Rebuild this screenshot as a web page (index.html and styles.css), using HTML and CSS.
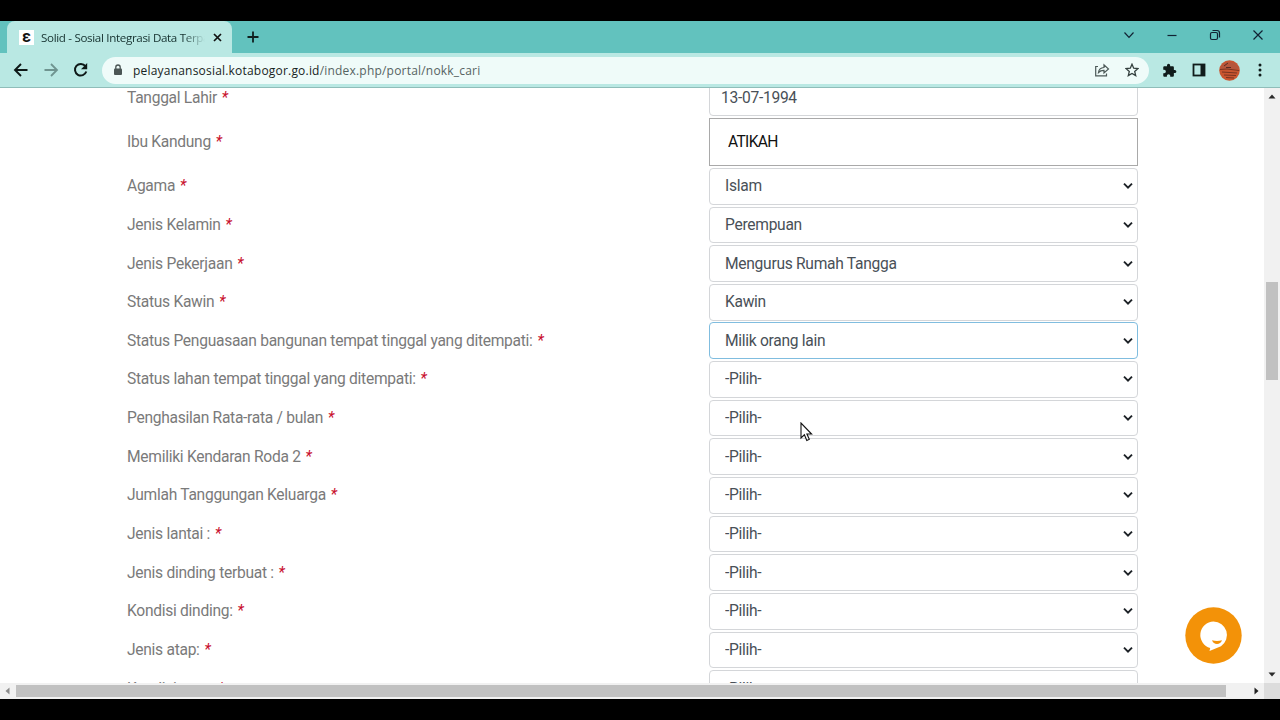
FILE: index.html
```
<!doctype html>
<html lang="id">

<head>
  <meta charset="utf-8">
  <title>Solid - Sosial Integrasi Data Terpadu</title>
  <link rel="stylesheet" href="styles.css">
</head>

<body>
  <!-- shared arrow for the dropdowns -->
  <svg width="0" height="0" class="defs">
    <symbol id="arrow" viewBox="0 0 10 8">
      <path d="M1 1.6L5 5.6L9 1.6" fill="none" stroke="#1c2126" stroke-width="1.9" />
    </symbol>
  </svg>

  <div class="browser">
    <!-- Tab strip -->
    <div class="tab-strip">
      <div class="tab">
        <span class="favicon">ε</span>
        <span class="tab-title">Solid - Sosial Integrasi Data Terpa</span>
        <svg class="tab-close" width="9" height="9" viewBox="0 0 9 9"><path d="M1 1L8 8M8 1L1 8" stroke="#111" stroke-width="1.7" /></svg>
      </div>
      <svg class="new-tab" width="12" height="12" viewBox="0 0 12 12"><path d="M6 0.5V11.5M0.5 6H11.5" stroke="#10201f" stroke-width="1.8" /></svg>
      <div class="window-buttons">
        <svg width="12" height="12" viewBox="0 0 12 12"><path d="M1.5 3.5L6 8.3L10.5 3.5" fill="none" stroke="#123" stroke-width="1.2" /></svg>
        <svg width="12" height="12" viewBox="0 0 12 12"><path d="M1.5 6.5H10.5" stroke="#123" stroke-width="1.2" /></svg>
        <svg width="12" height="12" viewBox="0 0 12 12"><g fill="none" stroke="#123" stroke-width="1.2"><rect x="1.5" y="3.5" width="7" height="7" rx="1.5" /><path d="M3.5 1.5H8Q10.5 1.5 10.5 4V8.5" /></g></svg>
        <svg width="12" height="12" viewBox="0 0 12 12"><path d="M1.5 1.5L10.5 10.5M10.5 1.5L1.5 10.5" stroke="#123" stroke-width="1.2" /></svg>
      </div>
    </div>

    <!-- Toolbar -->
    <div class="toolbar">
      <svg class="nav-icon" width="16" height="16" viewBox="0 0 16 16"><path d="M14.5 8H2.5M8 2L2 8L8 14" fill="none" stroke="#0d1817" stroke-width="1.9" /></svg>
      <svg class="nav-icon" width="16" height="16" viewBox="0 0 16 16"><path d="M1.5 8H13.5M8 2L14 8L8 14" fill="none" stroke="#6f9490" stroke-width="1.8" /></svg>
      <svg class="nav-icon" width="16" height="16" viewBox="0 0 16 16"><path d="M12.4 4.2A5.8 5.8 0 1 0 13.3 9.5" fill="none" stroke="#0d1817" stroke-width="2" /><path d="M14.2 1V7.2H8Z" fill="#0d1817" /></svg>
      <div class="address">
        <svg width="10" height="12" viewBox="0 0 10 12"><rect x="1" y="4.5" width="8" height="6.5" rx="1" fill="#4b5655" /><path d="M2.8 5V3.2A2.2 2.2 0 0 1 7.2 3.2V5" fill="none" stroke="#4b5655" stroke-width="1.3" /></svg>
        <span class="url">pelayanansosial.kotabogor.go.id<span class="path">/index.php/portal/nokk_cari</span></span>
        <svg class="share" width="16" height="16" viewBox="0 0 16 16"><g fill="none" stroke="#4c5958" stroke-width="1.2"><path d="M4 4.5H1.7V13.8H12.5V11.5" /><path d="M4.5 10.5Q5 5.8 10 5.5V2.8L14.5 7L10 11V8.3Q6.5 8.2 4.5 10.5Z" /></g></svg>
        <svg width="14" height="14" viewBox="0 0 14 14"><path d="M7 1.2L8.7 5.2L13 5.6L9.7 8.4L10.7 12.6L7 10.4L3.3 12.6L4.3 8.4L1 5.6L5.3 5.2Z" fill="none" stroke="#34403f" stroke-width="1.3" /></svg>
      </div>
      <svg class="puzzle" width="15" height="15" viewBox="0 0 24 24"><path fill="#101c1b" d="M20.5 11H19V7c0-1.1-.9-2-2-2h-4V3.5a2.5 2.5 0 0 0-5 0V5H4c-1.1 0-2 .9-2 2v3.800h1.5a2.7 2.7 0 0 1 0 5.4H2V20c0 1.1.9 2 2 2h3.8v-1.5a2.7 2.7 0 0 1 5.4 0V22H17c1.1 0 2-.9 2-2v-4h1.5a2.5 2.5 0 0 0 0-5z" /></svg>
      <svg class="panel" width="14" height="14" viewBox="0 0 14 14"><rect x="1.5" y="1.5" width="11" height="11" fill="none" stroke="#101c1b" stroke-width="1.8" /><path d="M8.5 1H13V13H8.5Z" fill="#101c1b" /></svg>
      <svg class="avatar" width="21" height="21" viewBox="0 0 21 21"><circle cx="10.5" cy="10.5" r="10.3" fill="#c9552f" /><path d="M1 9A10 10 0 0 1 20 9Z" fill="#b5573b" /><g fill="none" stroke="#71301f" stroke-width="0.9"><path d="M1 9.5L8 9L20 10.5M3 12L18 13M5 15L17 15.5M7 17.5L15 18" /><path d="M5 6L9 3M7 7.5H12" stroke="#4c2620" /></g></svg>
      <svg class="menu" width="4" height="14" viewBox="0 0 4 14"><circle cx="2" cy="2" r="1.5" /><circle cx="2" cy="7" r="1.5" /><circle cx="2" cy="12" r="1.5" /></svg>
    </div>

    <!-- Page -->
    <div class="viewport">
      <form class="page">
        <div class="row">
          <label>Tanggal Lahir <i>*</i></label>
          <div class="field"><input class="control" type="text" value="13-07-1994"></div>
        </div>
        <div class="row row-tall">
          <label>Ibu Kandung <i>*</i></label>
          <div class="field"><input class="control plain" type="text" value="ATIKAH"></div>
        </div>
        <div class="row">
          <label>Agama <i>*</i></label>
          <div class="field"><select class="control"><option>Islam</option></select><svg class="arrow"><use href="#arrow" /></svg></div>
        </div>
        <div class="row">
          <label>Jenis Kelamin <i>*</i></label>
          <div class="field"><select class="control"><option>Perempuan</option></select><svg class="arrow"><use href="#arrow" /></svg></div>
        </div>
        <div class="row">
          <label>Jenis Pekerjaan <i>*</i></label>
          <div class="field"><select class="control"><option>Mengurus Rumah Tangga</option></select><svg class="arrow"><use href="#arrow" /></svg></div>
        </div>
        <div class="row">
          <label>Status Kawin <i>*</i></label>
          <div class="field"><select class="control"><option>Kawin</option></select><svg class="arrow"><use href="#arrow" /></svg></div>
        </div>
        <div class="row">
          <label>Status Penguasaan bangunan tempat tinggal yang ditempati: <i>*</i></label>
          <div class="field"><select class="control active"><option>Milik orang lain</option></select><svg class="arrow"><use href="#arrow" /></svg></div>
        </div>
        <div class="row">
          <label>Status lahan tempat tinggal yang ditempati: <i>*</i></label>
          <div class="field"><select class="control"><option>-Pilih-</option></select><svg class="arrow"><use href="#arrow" /></svg></div>
        </div>
        <div class="row">
          <label>Penghasilan Rata-rata / bulan <i>*</i></label>
          <div class="field"><select class="control"><option>-Pilih-</option></select><svg class="arrow"><use href="#arrow" /></svg></div>
        </div>
        <div class="row">
          <label>Memiliki Kendaran Roda 2 <i>*</i></label>
          <div class="field"><select class="control"><option>-Pilih-</option></select><svg class="arrow"><use href="#arrow" /></svg></div>
        </div>
        <div class="row">
          <label>Jumlah Tanggungan Keluarga <i>*</i></label>
          <div class="field"><select class="control"><option>-Pilih-</option></select><svg class="arrow"><use href="#arrow" /></svg></div>
        </div>
        <div class="row">
          <label>Jenis lantai : <i>*</i></label>
          <div class="field"><select class="control"><option>-Pilih-</option></select><svg class="arrow"><use href="#arrow" /></svg></div>
        </div>
        <div class="row">
          <label>Jenis dinding terbuat : <i>*</i></label>
          <div class="field"><select class="control"><option>-Pilih-</option></select><svg class="arrow"><use href="#arrow" /></svg></div>
        </div>
        <div class="row">
          <label>Kondisi dinding: <i>*</i></label>
          <div class="field"><select class="control"><option>-Pilih-</option></select><svg class="arrow"><use href="#arrow" /></svg></div>
        </div>
        <div class="row">
          <label>Jenis atap: <i>*</i></label>
          <div class="field"><select class="control"><option>-Pilih-</option></select><svg class="arrow"><use href="#arrow" /></svg></div>
        </div>
        <div class="row">
          <label>Kondisi atap: <i>*</i></label>
          <div class="field"><select class="control"><option>-Pilih-</option></select><svg class="arrow"><use href="#arrow" /></svg></div>
        </div>
      </form>

      <div class="scroll-y">
        <svg width="8" height="5" viewBox="0 0 8 5"><path d="M4 0.5L7.5 4.5H0.5Z" fill="#2b2b2b" /></svg>
        <div class="thumb-y"></div>
        <svg class="down" width="8" height="5" viewBox="0 0 8 5"><path d="M4 4.5L7.5 0.5H0.5Z" fill="#2b2b2b" /></svg>
      </div>
    </div>

    <div class="scroll-x">
      <svg width="5" height="8" viewBox="0 0 5 8"><path d="M0.5 4L4.5 0.5V7.5Z" fill="#8b8b8b" /></svg>
      <div class="thumb-x"></div>
      <svg class="right" width="5" height="8" viewBox="0 0 5 8"><path d="M4.5 4L0.5 0.5V7.5Z" fill="#222" /></svg>
      <div class="corner"></div>
    </div>
  </div>

  <!-- Chat bubble -->
  <div class="chat">
    <svg width="57" height="57" viewBox="0 0 57 57">
      <circle cx="28.5" cy="28.5" r="28.2" fill="#f39208" />
      <path d="M28.5 14.5A13.5 13.5 0 0 1 36 39.2L24.5 44L25.2 41A13.5 13.5 0 0 1 28.5 14.5Z" fill="#fff" />
      <path d="M27 33.2Q32 34.8 37 33.2Q35.500 37 32 37Q28.500 37 27 33.2Z" fill="#f39208" />
    </svg>
  </div>

  <svg class="cursor" width="13" height="20" viewBox="0 0 13 20"><path d="M1 1V16L4.4 12.8L6.8 18.4L9.3 17.3L6.9 12H11.6Z" fill="#fff" stroke="#111" stroke-width="1.1" /></svg>
</body>

</html>
```
FILE: styles.css
```
body {
  background-color: #000;
  font-family: Roboto, sans-serif;
  margin: 0;
  padding: 21px 0;
  height: 678px;
  overflow: hidden;
}

.defs {
  position: absolute;
}

.browser {
  display: flex;
  flex-direction: column;
  height: 678px;
}

/* tab strip */
.tab-strip {
  display: flex;
  align-items: center;
  height: 32px;
  background-color: #62c2be;
}

.tab {
  display: flex;
  align-items: center;
  box-sizing: border-box;
  width: 225px;
  height: 32px;
  margin-left: 7px;
  padding-left: 12px;
  background-color: #b9e8e3;
  border-radius: 8px 8px 0 0;
}

.favicon {
  width: 15px;
  height: 15px;
  background-color: #fff;
  color: #111;
  font: bold 16px/14px Roboto, sans-serif;
  text-align: center;
}

.tab-title {
  width: 164px;
  margin-left: 7px;
  overflow: hidden;
  white-space: nowrap;
  font: 11.6px "Open Sans", sans-serif;
  letter-spacing: -0.33px;
  color: #15302e;
  -webkit-mask-image: linear-gradient(to right, #000 142px, transparent);
  mask-image: linear-gradient(to right, #000 142px, transparent);
}

.tab-close {
  margin-left: 8px;
}

.new-tab {
  margin-left: 15px;
}

.window-buttons {
  display: flex;
  gap: 31px;
  margin-left: auto;
  margin-right: 16px;
  margin-bottom: 5px;
}

/* toolbar */
.toolbar {
  display: flex;
  align-items: center;
  box-sizing: border-box;
  height: 35px;
  padding-left: 13px;
  background-color: #b9e8e3;
  border-bottom: 1px solid #8fbdb9;
}

.nav-icon {
  margin-right: 14px;
}

.address {
  display: flex;
  align-items: center;
  box-sizing: border-box;
  width: 1047px;
  height: 27px;
  margin-left: -1px;
  padding: 0 10px 0 11px;
  background-color: #effbf9;
  border-radius: 14px;
}

.url {
  margin-left: 10px;
  font: 12px "Open Sans", sans-serif;
  letter-spacing: 0.2px;
  color: #182423;
}

.path {
  color: #566362;
}

.share {
  margin-left: auto;
  margin-right: 15px;
}

.puzzle {
  margin-left: 13px;
}

.panel {
  margin-left: 15px;
}

.avatar {
  margin-left: 13px;
}

.menu {
  margin-left: 18px;
  fill: #101c1b;
}

/* page */
.viewport {
  display: flex;
  justify-content: space-between;
  height: 595px;
  overflow: hidden;
  background-color: #fff;
}

.page {
  width: 1011px;
  margin-top: -9.4px;
  margin-left: 127px;
}

.row {
  display: grid;
  grid-template-columns: 582px 429px;
  align-items: center;
  height: 38.65px;
}

.row-tall {
  height: 49.7px;
}

label {
  font-size: 15.6px;
  letter-spacing: -0.29px;
  color: #7a7a7a;
}

label i {
  margin-left: 1px;
  color: #c8102e;
}

.field {
  display: grid;
  align-items: center;
}

.control {
  grid-area: 1 / 1;
  appearance: none;
  box-sizing: border-box;
  width: 100%;
  height: 36.7px;
  padding: 0 15px;
  font: 15.6px Roboto, sans-serif;
  letter-spacing: -0.29px;
  color: #495057;
  background-color: #fff;
  border: 1px solid #d4d6d9;
  border-radius: 4px;
  outline: none;
}

input.control {
  padding: 0 11px;
}

.control.plain {
  height: 48px;
  padding: 0 18px;
  letter-spacing: -0.7px;
  color: #111;
  border-color: #a9a9a9;
  border-radius: 0;
}

.control.active {
  border-color: #80bddf;
}

.arrow {
  grid-area: 1 / 1;
  justify-self: end;
  width: 10px;
  height: 8px;
  margin-right: 5px;
  pointer-events: none;
}

/* scrollbars */
.scroll-y {
  display: flex;
  flex-direction: column;
  align-items: center;
  box-sizing: border-box;
  width: 16px;
  padding: 6px 0;
  background-color: #f1f1f1;
}

.thumb-y {
  width: 12px;
  height: 98px;
  margin-top: 183px;
  background-color: #c1c1c1;
}

.down {
  margin-top: auto;
}

.scroll-x {
  display: flex;
  align-items: center;
  height: 16px;
  padding-left: 5px;
  background-color: #f1f1f1;
}

.thumb-x {
  width: 1210px;
  height: 12px;
  margin-left: 6px;
  background-color: #c1c1c1;
}

.right {
  margin-left: auto;
  margin-right: 5px;
}

.corner {
  width: 16px;
  height: 16px;
  background-color: #dcdcdc;
}

/* floating items */
.chat {
  position: absolute;
  left: 1185px;
  top: 607px;
}

.cursor {
  position: absolute;
  left: 800px;
  top: 422px;
}
```
